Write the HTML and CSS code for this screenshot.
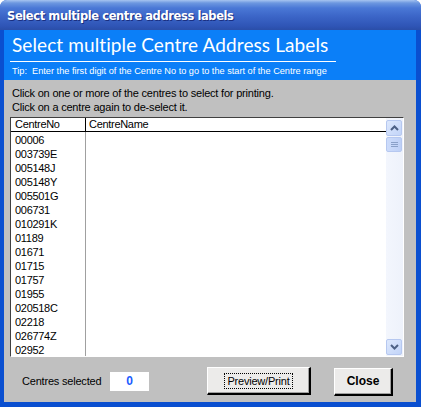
FILE: index.html
```html
<!DOCTYPE html>
<html>
<head>
<meta charset="utf-8">
<link rel="stylesheet" href="styles.css">
</head>
<body>
<div class="window">
  <div class="titlebar">Select multiple centre address labels</div>
  <div class="frame">
    <div class="header">
      <div class="header-title">Select multiple Centre Address Labels</div>
      <div class="header-rule"></div>
      <div class="tip">Tip:&nbsp; Enter the first digit of the Centre No to go to the start of the Centre range</div>
    </div>
    <div class="content">
      <div class="instructions">
        <div>Click on one or more of the centres to select for printing.</div>
        <div>Click on a centre again to de-select it.</div>
      </div>
      <div class="listbox">
        <div class="list-main">
          <div class="list-head">
            <div class="col-no">CentreNo</div>
            <div class="col-name">CentreName</div>
          </div>
          <div class="list-body">
            <div class="col-no rows">
              <div>00006</div><div>003739E</div><div>005148J</div><div>005148Y</div>
              <div>005501G</div><div>006731</div><div>010291K</div><div>01189</div>
              <div>01671</div><div>01715</div><div>01757</div><div>01955</div>
              <div>020518C</div><div>02218</div><div>026774Z</div><div>02952</div>
            </div>
            <div class="col-name"></div>
          </div>
        </div>
        <div class="scrollbar">
          <div class="sb-btn">
            <svg width="9" height="6" viewBox="0 0 9 6"><path d="M1 5 L4.5 1.5 L8 5" fill="none" stroke="#4d6185" stroke-width="2"/></svg>
          </div>
          <div class="sb-thumb">
            <svg width="7" height="7" viewBox="0 0 7 7"><path d="M0 1.5h7M0 3.5h7M0 5.5h7" stroke="#8aa0c8" stroke-width="1"/></svg>
          </div>
          <div class="sb-track"></div>
          <div class="sb-btn">
            <svg width="9" height="6" viewBox="0 0 9 6"><path d="M1 1 L4.5 4.5 L8 1" fill="none" stroke="#4d6185" stroke-width="2"/></svg>
          </div>
        </div>
      </div>
      <div class="footer">
        <div class="selected-label">Centres selected</div>
        <div class="selected-box">0</div>
        <div class="btn btn-preview"><span class="focus">Preview/Print</span></div>
        <div class="btn btn-close">Close</div>
      </div>
    </div>
  </div>
</div>
</body>
</html>
```

FILE: styles.css
```css
html, body {
  margin: 0;
  padding: 0;
  background: #ffffff;
}
body {
  width: 421px;
  height: 407px;
  overflow: hidden;
  font-family: "Liberation Sans", Arial, sans-serif;
}
.window {
  width: 421px;
  height: 407px;
  display: flex;
  flex-direction: column;
  background: #0a4fd0;
  border-radius: 7px 7px 0 0;
  overflow: hidden;
}
.titlebar {
  height: 30px;
  box-sizing: border-box;
  padding: 9px 0 0 7px;
  color: #ffffff;
  font-family: "DejaVu Sans", Verdana, sans-serif;
  font-weight: bold;
  font-size: 11.5px;
  letter-spacing: -0.4px;
  text-shadow: 1px 1px 0 #1a2f80;
  background: linear-gradient(to bottom, #a6c4f0 0px, #6c97e0 3px, #4a78d6 8px, #3c66c8 16px, #2f55b6 26px, #2a4ea8 30px);
}
.frame {
  flex: 1;
  display: flex;
  flex-direction: column;
  margin: 0 5px 5px 4px;
}
.header {
  height: 50px;
  box-sizing: border-box;
  background: #0b7ff8;
  padding: 3px 0 0 8px;
  color: #ffffff;
}
.header-title {
  font-family: "Lato", "Liberation Sans", sans-serif;
  font-size: 19px;
  line-height: 24px;
  height: 24px;
  letter-spacing: 0.1px;
}
.header-rule {
  width: 326px;
  height: 1px;
  background: #ffffff;
  margin: 4px 0 0 -2px;
}
.tip {
  font-size: 9.2px;
  line-height: 11px;
  margin-top: 4px;
}
.content {
  flex: 1;
  background: #c0c0c0;
  display: flex;
  flex-direction: column;
  padding: 6px 12px 0 6px;
}
.instructions {
  font-size: 11px;
  letter-spacing: -0.2px;
  line-height: 14px;
  color: #000000;
  padding-left: 2px;
  height: 31px;
}
.listbox {
  height: 240px;
  box-sizing: border-box;
  border-top: 1px solid #404040;
  border-left: 1px solid #404040;
  border-right: 1px solid #ffffff;
  border-bottom: 1px solid #ffffff;
  background: #ffffff;
  display: flex;
}
.list-main {
  flex: 1;
  display: flex;
  flex-direction: column;
  overflow: hidden;
}
.list-head {
  display: flex;
  height: 14px;
  box-sizing: border-box;
  border-bottom: 1px solid #000000;
  font-size: 11px;
  letter-spacing: -0.3px;
  line-height: 13px;
}
.list-head .col-no {
  border-right: 1px solid #000000;
}
.col-no {
  width: 75px;
  flex: none;
  box-sizing: border-box;
  padding-left: 4px;
}
.col-name {
  flex: 1;
  padding-left: 3px;
}
.list-body {
  flex: 1;
  display: flex;
  overflow: hidden;
}
.list-body .col-no {
  border-right: 1px solid #a0a0a0;
}
.rows {
  font-size: 11px;
  letter-spacing: -0.3px;
  line-height: 14px;
  padding-top: 1px;
}
.scrollbar {
  width: 17px;
  flex: none;
  display: flex;
  flex-direction: column;
  background: linear-gradient(to right, #f3f6fd, #eef2fb);
  padding: 2px 1px 1px 0;
  box-sizing: border-box;
}
.sb-btn {
  height: 16px;
  box-sizing: border-box;
  border: 1px solid #b6c8f0;
  border-radius: 2px;
  background: linear-gradient(to bottom right, #dde8fd, #c2d4f8);
  display: flex;
  align-items: center;
  justify-content: center;
}
.sb-thumb {
  height: 15px;
  box-sizing: border-box;
  border: 1px solid #b6c8f0;
  border-radius: 2px;
  background: linear-gradient(to right, #cddcfb, #bed0f6);
  display: flex;
  align-items: center;
  justify-content: center;
  margin-top: 1px;
}
.sb-track {
  flex: 1;
}
.footer {
  display: flex;
  align-items: center;
  height: 45px;
  box-sizing: border-box;
  padding-top: 2px;
}
.selected-label {
  font-size: 11px;
  letter-spacing: -0.2px;
  margin-left: 12px;
  width: 88px;
}
.selected-box {
  width: 39px;
  height: 19px;
  background: #ffffff;
  color: #1a5cff;
  font-weight: bold;
  font-size: 12px;
  line-height: 19px;
  text-align: center;
  margin-top: 1px;
}
.btn {
  height: 28px;
  box-sizing: border-box;
  background: #ecebea;
  border-top: 1px solid #ffffff;
  border-left: 1px solid #ffffff;
  border-right: 2px solid #000000;
  border-bottom: 2px solid #000000;
  box-shadow: inset -1px -1px 0 #a0a0a0;
  display: flex;
  align-items: center;
  justify-content: center;
  font-size: 11px;
  color: #000000;
}
.btn-preview {
  width: 104px;
  margin-left: 58px;
  margin-top: 1px;
}
.focus {
  border: 1px dotted #000000;
  padding: 1px 2px;
  line-height: 12px;
  letter-spacing: -0.2px;
}
.btn-close {
  width: 59px;
  margin-left: 23px;
  margin-top: 2px;
  font-weight: bold;
  font-size: 12px;
}
```
